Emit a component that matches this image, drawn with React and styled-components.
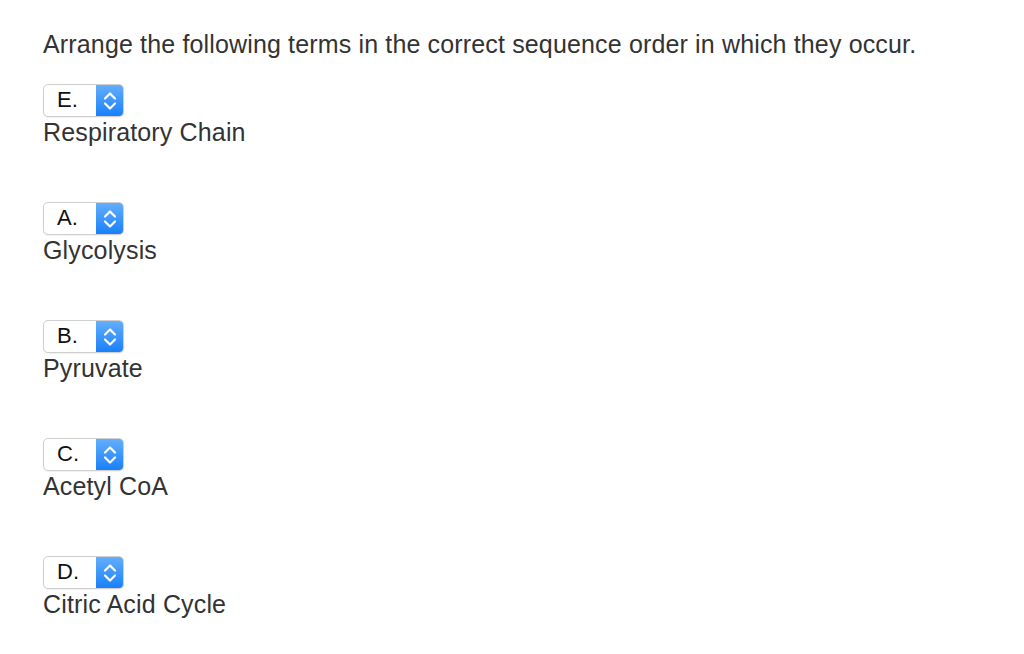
import React from "react";
import styled, { createGlobalStyle } from "styled-components";

const Global = createGlobalStyle`
  html, body { margin: 0; padding: 0; background: #fff; }
  body { font-family: "Liberation Sans", Arial, sans-serif; }
`;

const Page = styled.div`
  padding: 30px 0 0 43px;
  color: #333;
`;

const Heading = styled.div`
  font-size: 25px;
  line-height: 29px;
  letter-spacing: 0.15px;
  margin-bottom: 25px;
`;

const List = styled.div`
  display: flex;
  flex-direction: column;
  gap: 55px;
`;

const Item = styled.div`
  display: flex;
  flex-direction: column;
  align-items: flex-start;
`;

const Select = styled.div`
  display: flex;
  width: 81px;
  height: 33px;
  box-sizing: border-box;
  border: 1px solid #cfcfcf;
  border-radius: 5px;
  overflow: hidden;
  background: #fff;
  box-shadow: 0 1px 1px rgba(0, 0, 0, 0.06);
`;

const Value = styled.div`
  flex: 1;
  display: flex;
  align-items: center;
  padding-left: 13px;
  padding-bottom: 1px;
  font-size: 22px;
  color: #111;
`;

const Arrows = styled.div`
  width: 27px;
  background: linear-gradient(#63aefd, #1980fa);
  display: flex;
  align-items: center;
  justify-content: center;
`;

const Label = styled.div`
  font-size: 25px;
  line-height: 30px;
  letter-spacing: 0.15px;
`;

const Chevrons = () => (
  <svg width="14" height="20" viewBox="0 0 14 20" fill="none" stroke="#fff" strokeWidth="2.2" strokeLinecap="round" strokeLinejoin="round">
    <path d="M2 7.5 L7 2.5 L12 7.5" />
    <path d="M2 12.5 L7 17.5 L12 12.5" />
  </svg>
);

const items = [
  ["E.", "Respiratory Chain"],
  ["A.", "Glycolysis"],
  ["B.", "Pyruvate"],
  ["C.", "Acetyl CoA"],
  ["D.", "Citric Acid Cycle"],
];

export default function App() {
  return (
    <Page>
      <Global />
      <Heading>Arrange the following terms in the correct sequence order in which they occur.</Heading>
      <List>
        {items.map(([v, l]) => (
          <Item key={l}>
            <Select>
              <Value>{v}</Value>
              <Arrows><Chevrons /></Arrows>
            </Select>
            <Label>{l}</Label>
          </Item>
        ))}
      </List>
    </Page>
  );
}
